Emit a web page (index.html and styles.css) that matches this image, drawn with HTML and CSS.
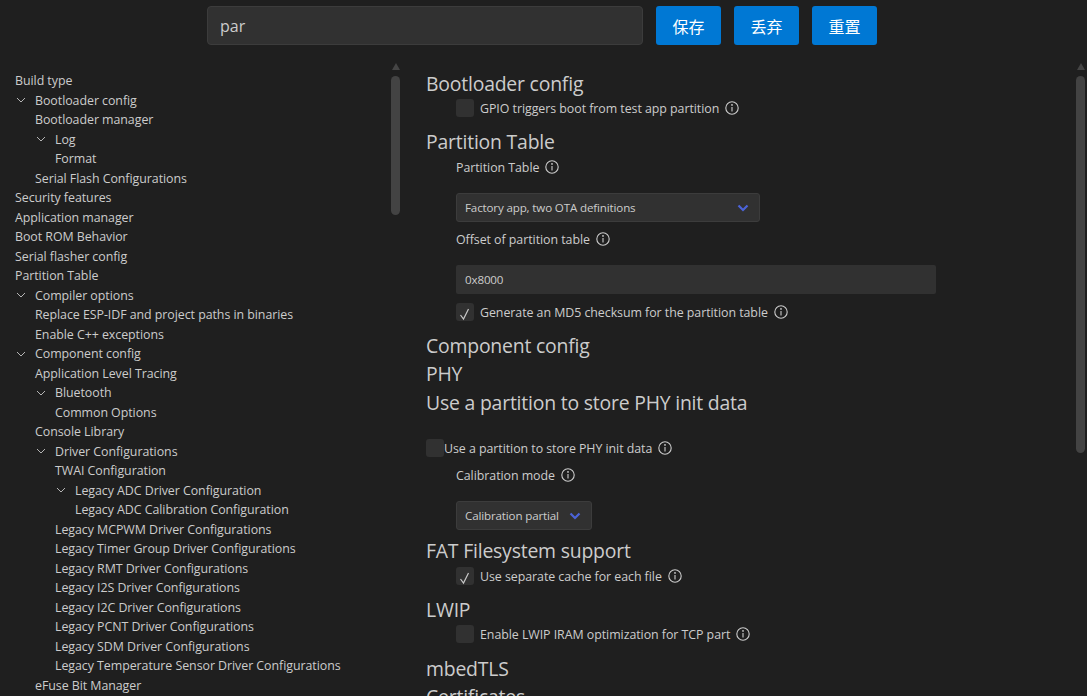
FILE: index.html
```html
<!DOCTYPE html>
<html lang="en">
<head>
<meta charset="utf-8">
<title>SDK Configuration</title>
<link rel="stylesheet" href="styles.css">
</head>
<body>
<div class="topbar">
  <div class="search">par</div>
  <button class="btn">保存</button>
  <button class="btn">丢弃</button>
  <button class="btn">重置</button>
</div>
<div class="main">
  <div class="side">
    <ul class="tree">
      <li class="l0">Build type</li>
      <li class="l0 open"><span class="chev"><svg viewBox="0 0 10 6" width="10" height="6"><polyline points="1,1 5,5 9,1"/></svg></span>Bootloader config</li>
      <li class="l1">Bootloader manager</li>
      <li class="l1 open"><span class="chev"><svg viewBox="0 0 10 6" width="10" height="6"><polyline points="1,1 5,5 9,1"/></svg></span>Log</li>
      <li class="l2">Format</li>
      <li class="l1">Serial Flash Configurations</li>
      <li class="l0">Security features</li>
      <li class="l0">Application manager</li>
      <li class="l0">Boot ROM Behavior</li>
      <li class="l0">Serial flasher config</li>
      <li class="l0">Partition Table</li>
      <li class="l0 open"><span class="chev"><svg viewBox="0 0 10 6" width="10" height="6"><polyline points="1,1 5,5 9,1"/></svg></span>Compiler options</li>
      <li class="l1">Replace ESP-IDF and project paths in binaries</li>
      <li class="l1">Enable C++ exceptions</li>
      <li class="l0 open"><span class="chev"><svg viewBox="0 0 10 6" width="10" height="6"><polyline points="1,1 5,5 9,1"/></svg></span>Component config</li>
      <li class="l1">Application Level Tracing</li>
      <li class="l1 open"><span class="chev"><svg viewBox="0 0 10 6" width="10" height="6"><polyline points="1,1 5,5 9,1"/></svg></span>Bluetooth</li>
      <li class="l2">Common Options</li>
      <li class="l1">Console Library</li>
      <li class="l1 open"><span class="chev"><svg viewBox="0 0 10 6" width="10" height="6"><polyline points="1,1 5,5 9,1"/></svg></span>Driver Configurations</li>
      <li class="l2">TWAI Configuration</li>
      <li class="l2 open"><span class="chev"><svg viewBox="0 0 10 6" width="10" height="6"><polyline points="1,1 5,5 9,1"/></svg></span>Legacy ADC Driver Configuration</li>
      <li class="l3">Legacy ADC Calibration Configuration</li>
      <li class="l2">Legacy MCPWM Driver Configurations</li>
      <li class="l2">Legacy Timer Group Driver Configurations</li>
      <li class="l2">Legacy RMT Driver Configurations</li>
      <li class="l2">Legacy I2S Driver Configurations</li>
      <li class="l2">Legacy I2C Driver Configurations</li>
      <li class="l2">Legacy PCNT Driver Configurations</li>
      <li class="l2">Legacy SDM Driver Configurations</li>
      <li class="l2">Legacy Temperature Sensor Driver Configurations</li>
      <li class="l1">eFuse Bit Manager</li>
    </ul>
    <div class="scrollbar">
      <div class="sb-arrow"></div>
      <div class="sb-thumb sb-left"></div>
    </div>
  </div>
  <div class="content">
    <div class="form">
      <h2 class="heading">Bootloader config</h2>
      <div class="cb-row ind">
        <span class="box"></span>
        <span class="cb-label">GPIO triggers boot from test app partition</span>
        <span class="info"><svg viewBox="0 0 14 14" width="14" height="14"><circle cx="7" cy="7" r="6.2"/><line x1="7" y1="6" x2="7" y2="10.5"/><circle class="dot" cx="7" cy="3.9" r="0.9"/></svg></span>
      </div>

      <h2 class="heading gap-top">Partition Table</h2>
      <div class="field-label ind">Partition Table<span class="info"><svg viewBox="0 0 14 14" width="14" height="14"><circle cx="7" cy="7" r="6.2"/><line x1="7" y1="6" x2="7" y2="10.5"/><circle class="dot" cx="7" cy="3.9" r="0.9"/></svg></span></div>
      <div class="select ind sel-wide">
        <span>Factory app, two OTA definitions</span>
        <svg class="sel-chev" viewBox="0 0 12 8" width="12" height="8"><polyline points="1.5,1.5 6,6 10.5,1.5"/></svg>
      </div>
      <div class="field-label ind">Offset of partition table<span class="info"><svg viewBox="0 0 14 14" width="14" height="14"><circle cx="7" cy="7" r="6.2"/><line x1="7" y1="6" x2="7" y2="10.5"/><circle class="dot" cx="7" cy="3.9" r="0.9"/></svg></span></div>
      <div class="textbox ind">0x8000</div>
      <div class="cb-row ind">
        <span class="box checked"><svg viewBox="0 0 18 18" width="18" height="18"><polyline points="4.5,12 7.5,16 12.5,6"/></svg></span>
        <span class="cb-label">Generate an MD5 checksum for the partition table</span>
        <span class="info"><svg viewBox="0 0 14 14" width="14" height="14"><circle cx="7" cy="7" r="6.2"/><line x1="7" y1="6" x2="7" y2="10.5"/><circle class="dot" cx="7" cy="3.9" r="0.9"/></svg></span>
      </div>

      <h2 class="heading gap-top">Component config</h2>
      <h2 class="heading">PHY</h2>
      <h2 class="heading tall">Use a partition to store PHY init data</h2>
      <div class="cb-row flush">
        <span class="box"></span>
        <span class="cb-label tight">Use a partition to store PHY init data</span>
        <span class="info"><svg viewBox="0 0 14 14" width="14" height="14"><circle cx="7" cy="7" r="6.2"/><line x1="7" y1="6" x2="7" y2="10.5"/><circle class="dot" cx="7" cy="3.9" r="0.9"/></svg></span>
      </div>
      <div class="field-label ind">Calibration mode<span class="info"><svg viewBox="0 0 14 14" width="14" height="14"><circle cx="7" cy="7" r="6.2"/><line x1="7" y1="6" x2="7" y2="10.5"/><circle class="dot" cx="7" cy="3.9" r="0.9"/></svg></span></div>
      <div class="select ind sel-narrow">
        <span>Calibration partial</span>
        <svg class="sel-chev" viewBox="0 0 12 8" width="12" height="8"><polyline points="1.5,1.5 6,6 10.5,1.5"/></svg>
      </div>

      <h2 class="heading">FAT Filesystem support</h2>
      <div class="cb-row ind after-h">
        <span class="box checked"><svg viewBox="0 0 18 18" width="18" height="18"><polyline points="4.5,12 7.5,16 12.5,6"/></svg></span>
        <span class="cb-label">Use separate cache for each file</span>
        <span class="info"><svg viewBox="0 0 14 14" width="14" height="14"><circle cx="7" cy="7" r="6.2"/><line x1="7" y1="6" x2="7" y2="10.5"/><circle class="dot" cx="7" cy="3.9" r="0.9"/></svg></span>
      </div>
      <h2 class="heading gap-top">LWIP</h2>
      <div class="cb-row ind">
        <span class="box"></span>
        <span class="cb-label">Enable LWIP IRAM optimization for TCP part</span>
        <span class="info"><svg viewBox="0 0 14 14" width="14" height="14"><circle cx="7" cy="7" r="6.2"/><line x1="7" y1="6" x2="7" y2="10.5"/><circle class="dot" cx="7" cy="3.9" r="0.9"/></svg></span>
      </div>
      <h2 class="heading gap-top2">mbedTLS</h2>
      <h2 class="heading">Certificates</h2>
    </div>
    <div class="scrollbar">
      <div class="sb-arrow"></div>
      <div class="sb-thumb sb-right"></div>
    </div>
  </div>
</div>
</body>
</html>
```

FILE: styles.css
```css
html, body {
  margin: 0;
  padding: 0;
  height: 696px;
  overflow: hidden;
  background: #1f1f1f;
  color: #cccccc;
  font-family: "Open Sans", "Noto Sans", "Noto Sans CJK SC", sans-serif;
}

.topbar {
  display: flex;
  justify-content: center;
  align-items: center;
  gap: 13px;
  padding-top: 6px;
  padding-right: 3px;
  height: 39px;
}

.search {
  width: 422px;
  height: 37px;
  background: #313131;
  border: 1px solid #3c3c3c;
  border-radius: 4px;
  padding-left: 12px;
  display: flex;
  align-items: center;
  font-size: 16px;
  color: #cccccc;
}

.btn {
  width: 65px;
  height: 39px;
  background: #0078d4;
  color: #ffffff;
  border: none;
  border-radius: 3px;
  font-family: "Noto Sans CJK SC", sans-serif;
  font-size: 16px;
  padding: 0;
}

.main {
  display: flex;
  margin-top: 13px;
  height: 638px;
}

.side {
  width: 400px;
  display: flex;
}

.tree {
  list-style: none;
  margin: 0;
  padding: 13px 0 0 0;
  flex: 1;
  font-size: 12.4px;
  letter-spacing: -0.05px;
}

.tree li {
  height: 19.5px;
  line-height: 19.5px;
  white-space: nowrap;
  display: flex;
  align-items: center;
}

.tree li.l0 { padding-left: 15px; }
.tree li.l1 { padding-left: 35px; }
.tree li.l2 { padding-left: 55px; }
.tree li.l3 { padding-left: 75px; }
.tree li.open.l0 { padding-left: 35px; }
.tree li.open.l1 { padding-left: 55px; }
.tree li.open.l2 { padding-left: 75px; }

.tree li.open .chev {
  width: 20px;
  margin-left: -20px;
  display: inline-flex;
  align-items: center;
}

.chev svg {
  fill: none;
  stroke: #b5b5b5;
  stroke-width: 1;
  margin-left: 1px;
}

.scrollbar {
  width: 9px;
  display: flex;
  flex-direction: column;
  align-items: center;
  padding-top: 5px;
}

.sb-arrow {
  width: 0;
  height: 0;
  border-left: 4.5px solid transparent;
  border-right: 4.5px solid transparent;
  border-bottom: 7px solid #454545;
}

.sb-thumb {
  width: 9px;
  margin-top: 6px;
  background: #434343;
  border-radius: 5px;
}
.sb-left { height: 139px; }
.sb-right { height: 377px; }

.content {
  flex: 1;
  display: flex;
  padding-right: 2px;
}

.form {
  flex: 1;
  padding-left: 26px;
  padding-top: 12px;
}

.heading {
  margin: 0;
  font-weight: normal;
  font-size: 19.4px;
  letter-spacing: -0.2px;
  height: 28px;
  line-height: 28px;
  white-space: nowrap;
  color: #cccccc;
}
.heading.tall { height: 29px; margin-top: 1px; }

.gap-top { margin-top: 10px; }
.gap-top2 { margin-top: 11px; }

.ind { margin-left: 30px; }

.cb-row {
  height: 20px;
  display: flex;
  align-items: center;
  font-size: 12.4px;
  letter-spacing: -0.05px;
}
.cb-row.after-h { margin-top: 1px; }

.box {
  width: 18px;
  height: 18px;
  background: #313131;
  border-radius: 3px;
  flex: none;
  display: block;
}
.box svg {
  display: block;
  fill: none;
  stroke: #c8c8c8;
  stroke-width: 1.2;
}

.cb-label { margin-left: 6px; }
.cb-label.tight { margin-left: 0; }

.info {
  display: inline-flex;
  margin-left: 6px;
}
.info svg {
  fill: none;
  stroke: #cccccc;
  stroke-width: 1.1;
}
.info svg .dot {
  fill: #cccccc;
  stroke: none;
}

.field-label {
  height: 20px;
  display: flex;
  align-items: center;
  font-size: 12.4px;
  letter-spacing: -0.05px;
  margin-top: 1px;
  margin-bottom: 16px;
}

.select {
  height: 27px;
  background: #313131;
  border: 1px solid #3c3c3c;
  border-radius: 3px;
  display: flex;
  align-items: center;
  justify-content: space-between;
  padding: 0 10px 0 8px;
  font-size: 11.6px;
  letter-spacing: -0.15px;
  margin-bottom: 7px;
}
.sel-wide { width: 284px; }
.sel-narrow { width: 116px; }

.sel-chev {
  fill: none;
  stroke: #4b63d8;
  stroke-width: 2.2;
}

.textbox {
  height: 29px;
  width: 471px;
  background: #313131;
  border-radius: 2px;
  display: flex;
  align-items: center;
  padding-left: 9px;
  font-size: 11.6px;
  letter-spacing: -0.15px;
  margin-bottom: 8px;
}

.cb-row.flush { margin-top: 20px; margin-bottom: 7px; }
```
